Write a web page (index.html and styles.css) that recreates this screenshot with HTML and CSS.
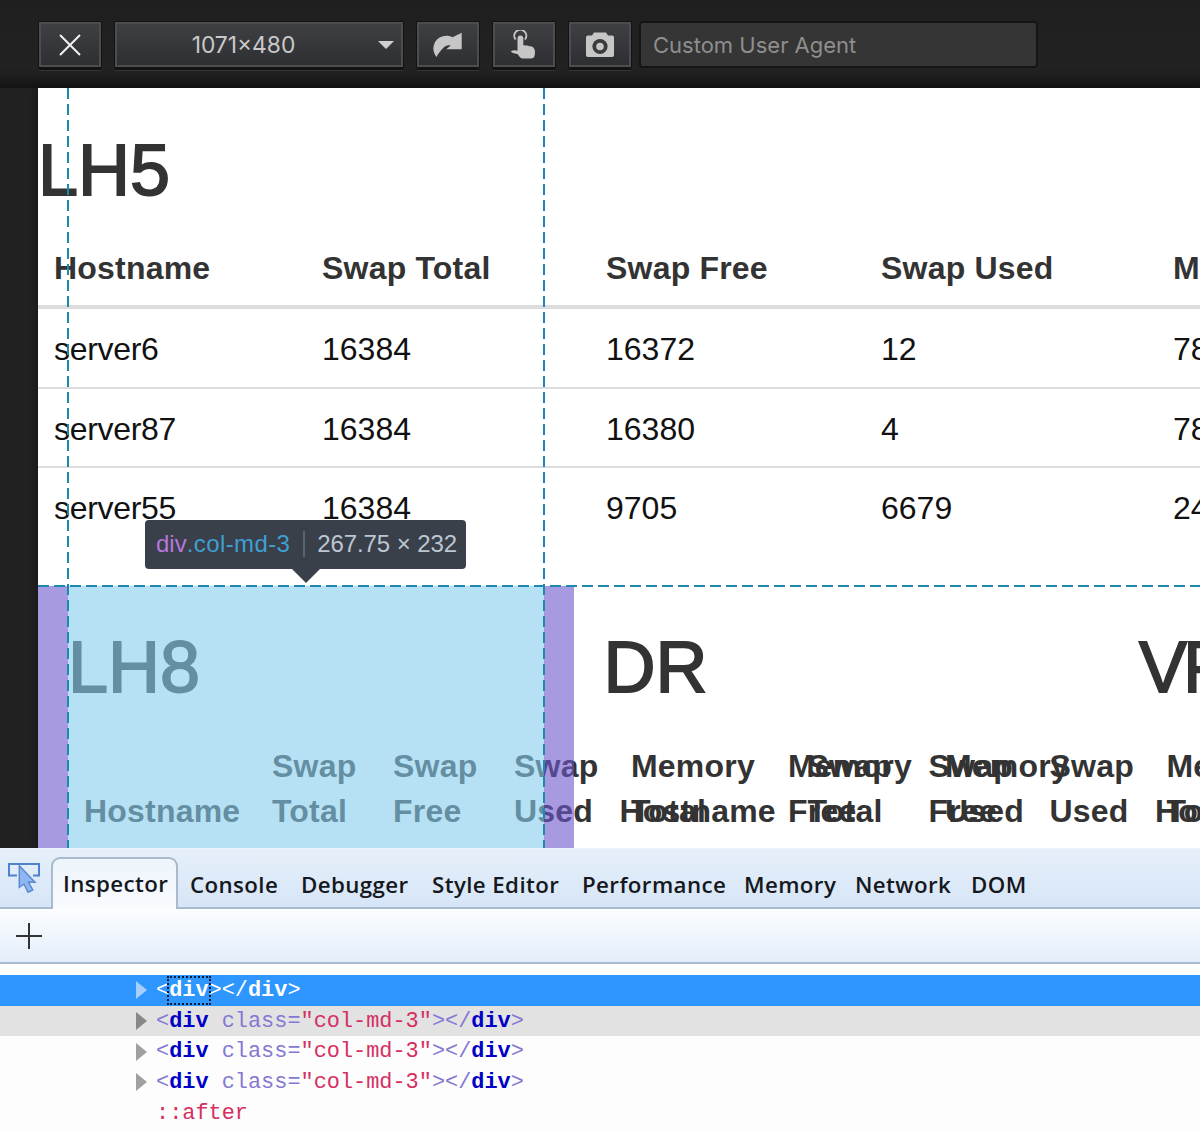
FILE: index.html
```html
<!DOCTYPE html>
<html lang="en">
<head>
<meta charset="utf-8">
<title>Responsive Design Mode</title>
<link rel="stylesheet" href="styles.css">
</head>
<body>
<header class="rdm-bar">
  <button class="rdm-btn"><svg width="24" height="24" viewBox="0 0 24 24"><path d="M2 2 22 22M22 2 2 22" class="x-stroke"/></svg></button>
  <div class="rdm-btn rdm-select"><span>1071×480</span><i class="caret"></i></div>
  <button class="rdm-btn"><svg width="32" height="28" viewBox="0 0 32 28"><path class="ico" d="M4.5 26C.8 21 .4 15.5 3.4 10.5 7 5 14 3 20.5 6.2L29.7 1.8V18.3H14.2L18.7 14.6C15.8 13.6 13 15 11.2 17 8.8 19.6 6 22.8 4.5 26Z"/></svg></button>
  <button class="rdm-btn"><svg width="28" height="30" viewBox="0 0 28 30"><path class="ico-line" d="M5.6 9.5A6 6 0 1 1 15 9.5"/><path class="ico" d="M7.5 8.5a2.9 2.9 0 0 1 5.8 0V15.5c1-.5 2.5-.3 3 .3 1-.5 2.5-.2 3 .6 1.2-.4 3.5.2 4.5 1.6 1.5 2 1.5 6 .5 8.5-.5 1.2-1.5 2-3 2H12.5c-1.5 0-2.5-1-3.5-2.5L7.5 24c-2-.2-5.5-1-6.8-2.8 2-1.2 5-1.2 6.8-.4Z"/></svg></button>
  <button class="rdm-btn"><svg width="28" height="25" viewBox="0 0 28 25"><path class="ico" d="M2 3.5H6L8 .5H20L22 3.5H26A2 2 0 0 1 28 5.5V23A2 2 0 0 1 26 25H2A2 2 0 0 1 0 23V5.5A2 2 0 0 1 2 3.5Z"/><circle class="lens-out" cx="14" cy="14.5" r="7.6"/><circle class="ico" cx="14" cy="14.5" r="3.8"/></svg></button>
  <div class="ua-input">Custom User Agent</div>
</header>

<main class="viewport">
  <h1 class="title">LH5</h1>
  <table class="tbl tbl-wide">
    <colgroup><col class="w268"><col class="w284"><col class="w275"><col class="w292"><col class="w200"></colgroup>
    <thead><tr><th>Hostname</th><th>Swap Total</th><th>Swap Free</th><th>Swap Used</th><th>Memory</th></tr></thead>
    <tbody>
      <tr><td>server6</td><td>16384</td><td>16372</td><td>12</td><td>78</td></tr>
      <tr><td>server87</td><td>16384</td><td>16380</td><td>4</td><td>78</td></tr>
      <tr><td>server55</td><td>16384</td><td>9705</td><td>6679</td><td>24</td></tr>
    </tbody>
  </table>

  <div class="cols">
    <section class="col">
      <h1 class="title">LH8</h1>
      <table class="tbl tbl-narrow">
        <colgroup><col class="w188"><col class="w121"><col class="w121"><col class="w117"><col class="w157"><col class="w157"><col class="w140"></colgroup>
        <thead><tr><th>Hostname</th><th>Swap Total</th><th>Swap Free</th><th>Swap Used</th><th>Memory Total</th><th>Memory Free</th><th>Memory Used</th></tr></thead>
      </table>
    </section>
    <section class="col">
      <h1 class="title">DR</h1>
      <table class="tbl tbl-narrow">
        <colgroup><col class="w188"><col class="w121"><col class="w121"><col class="w117"><col class="w157"><col class="w157"><col class="w140"></colgroup>
        <thead><tr><th>Hostname</th><th>Swap Total</th><th>Swap Free</th><th>Swap Used</th><th>Memory Total</th><th>Memory Free</th><th>Memory Used</th></tr></thead>
      </table>
    </section>
    <section class="col">
      <h1 class="title title-tight">VP</h1>
      <table class="tbl tbl-narrow">
        <colgroup><col class="w188"><col class="w121"><col class="w121"><col class="w117"><col class="w157"><col class="w157"><col class="w140"></colgroup>
        <thead><tr><th>Hostname</th><th>Swap Total</th><th>Swap Free</th><th>Swap Used</th><th>Memory Total</th><th>Memory Free</th><th>Memory Used</th></tr></thead>
      </table>
    </section>
  </div>

  <div class="hl-box"></div>
  <div class="guide guide-v guide-left"></div>
  <div class="guide guide-v guide-right"></div>
  <div class="guide guide-h"></div>
  <div class="tip"><span class="tip-tag">div</span><span class="tip-class">.col-md-3</span><i class="tip-sep"></i><span class="tip-size">267.75 × 232</span></div>
</main>

<footer class="devtools">
  <nav class="tabbar">
    <svg class="picker" width="32" height="30" viewBox="0 0 32 30"><path class="picker-box" d="M9 12.5H1V1H31V12.5H25"/><path class="picker-arrow" d="M11.3 2.7 27 19.3H20.5L24.8 27 20 29.3 16 21 11.3 24.3Z"/></svg>
    <div class="tab tab-on">Inspector</div>
    <div class="tab">Console</div>
    <div class="tab">Debugger</div>
    <div class="tab">Style Editor</div>
    <div class="tab">Performance</div>
    <div class="tab">Memory</div>
    <div class="tab">Network</div>
    <div class="tab">DOM</div>
  </nav>
  <div class="inspector-bar"><svg width="26" height="26" viewBox="0 0 26 26"><path class="plus" d="M13 0V26M0 13H26"/></svg></div>
  <div class="markup">
    <div class="node node-selected"><i class="tw"></i><span>&lt;<b class="focus">div</b>&gt;&lt;/<b>div</b>&gt;</span></div>
    <div class="node node-hover"><i class="tw"></i><span><span class="p">&lt;</span><b>div</b> <span class="p">class=</span><span class="v">"col-md-3"</span><span class="p">&gt;&lt;/</span><b>div</b><span class="p">&gt;</span></span></div>
    <div class="node"><i class="tw"></i><span><span class="p">&lt;</span><b>div</b> <span class="p">class=</span><span class="v">"col-md-3"</span><span class="p">&gt;&lt;/</span><b>div</b><span class="p">&gt;</span></span></div>
    <div class="node"><i class="tw"></i><span><span class="p">&lt;</span><b>div</b> <span class="p">class=</span><span class="v">"col-md-3"</span><span class="p">&gt;&lt;/</span><b>div</b><span class="p">&gt;</span></span></div>
    <div class="node node-pseudo"><span class="v">::after</span></div>
  </div>
</footer>
</body>
</html>
```
FILE: styles.css
```css
* { box-sizing: border-box; }
html, body { margin: 0; height: 100%; }
body {
  width: 1200px; height: 1130px; overflow: hidden;
  display: flex; flex-direction: column;
  background: #212121;
  font-family: "Liberation Sans", Arial, sans-serif;
}

/* Top bar */
.rdm-bar {
  flex: 0 0 88px;
  display: flex; align-items: flex-start; gap: 14px;
  padding: 22px 0 0 39px;
  background: linear-gradient(#1f1f1f 0, #222 78%, #151515 100%);
}
.rdm-btn {
  width: 62px; height: 45px; padding: 0;
  display: flex; align-items: center; justify-content: center;
  border: 2px solid #4c4d4f;
  background: linear-gradient(#3f4043, #2e2f32);
  box-shadow: 0 0 0 1px #141414, 0 3px 0 0 #111, 0 4px 0 0 #363636;
  font: 22.8px "Inter", sans-serif; color: #c9c9c9;
}
.rdm-select { width: 288px; position: relative; padding-right: 31px; }
.caret {
  position: absolute; right: 7px; top: 17px; width: 0; height: 0;
  border-left: 8px solid transparent; border-right: 8px solid transparent;
  border-top: 8px solid #cfcfcf;
}
.x-stroke { stroke: #f2f2f2; stroke-width: 2; fill: none; }
.ico { fill: #c6c6c6; }
.ico-line { fill: none; stroke: #c6c6c6; stroke-width: 2; }
.lens-out { fill: #3a3b3d; }
.ua-input {
  width: 399px; height: 47px; margin: -1px 0 0 -6px; padding-left: 12px;
  display: flex; align-items: center;
  background: #353535; border: 2px solid #151515; border-radius: 4px;
  font: 22px "Inter", sans-serif; color: #8e8e8e;
}

/* Emulated page */
.viewport {
  flex: 0 0 760px; margin-left: 38px; position: relative; overflow: hidden;
  background: #fff; color: #333;
  font-size: 32px; line-height: 1.42857;
  box-shadow: 0 0 8px rgba(0, 0, 0, .4);
}
.title {
  margin: 43px 0 17px; font-size: 72px; line-height: 1.1; font-weight: 400; color: #333;
  -webkit-text-stroke: 1.8px #333;
}
.col .title { margin: 44px 0 16px; }
.col .title-tight { letter-spacing: -4px; }
.tbl { border-collapse: collapse; table-layout: fixed; }
.tbl th, .tbl td { padding: 16px; text-align: left; vertical-align: bottom; }
.tbl th { font-weight: 700; border-bottom: 4px solid #ddd; letter-spacing: .2px; padding: 19px 16px 13px; }
.tbl td { border-top: 2px solid #ddd; color: #111; padding: 18px 16px 14px; }
.tbl td:first-child { letter-spacing: -.3px; }
.tbl thead + tbody tr:first-child td { border-top: 0; }
.tbl-wide { width: 1319px; margin-bottom: 38px; }
.tbl-narrow { width: 1001px; }
.tbl-narrow th { line-height: 45px; padding: 21px 16px 16px; }
.w268 { width: 268px; } .w284 { width: 284px; } .w275 { width: 275px; }
.w292 { width: 292px; } .w200 { width: 200px; } .w188 { width: 188px; }
.w121 { width: 121px; } .w117 { width: 117px; } .w157 { width: 157px; }
.w140 { width: 140px; }
.cols { display: flex; }
.col { flex: 0 0 535.5px; padding: 0 30px; min-width: 0; }

/* Highlighter overlay */
.hl-box {
  position: absolute; left: 0; top: 498px; bottom: 0; width: 536px;
  border-left: 30px solid rgba(110, 87, 203, .6);
  border-right: 30px solid rgba(110, 87, 203, .6);
  background: rgba(133, 203, 235, .6);
  background-clip: padding-box;
}
.guide { position: absolute; }
.guide-v {
  top: 0; bottom: 0; width: 2px;
  background: repeating-linear-gradient(to bottom, #1d88b0 0 11px, transparent 11px 16px);
}
.guide-left { left: 29px; }
.guide-right { left: 505px; }
.guide-h {
  left: 0; right: 0; top: 497px; height: 2px;
  background: repeating-linear-gradient(to right, #1d88b0 0 11px, transparent 11px 16px);
}
.tip {
  position: absolute; left: 107px; top: 432px; width: 321px; height: 49px;
  display: flex; align-items: center; padding: 0 0 1px 11px;
  background: #39404a; border-radius: 4px;
  font-size: 24px; line-height: 1; white-space: nowrap;
}
.tip::after {
  content: ""; position: absolute; left: 147px; top: 49px; width: 0; height: 0;
  border-left: 14px solid transparent; border-right: 14px solid transparent;
  border-top: 14px solid #39404a;
}
.tip-tag { color: #b876d8; }
.tip-class { color: #3f9fd2; letter-spacing: .4px; }
.tip-sep { width: 2px; height: 26px; margin: 0 12px 0 13px; background: #596470; }
.tip-size { color: #bcc6d2; letter-spacing: -.1px; }

/* Dev tools */
.devtools { flex: 1; display: flex; flex-direction: column; background: #fdfdfd; min-height: 0; position: relative; }
.tabbar {
  flex: 0 0 61px; position: relative;
  display: grid; align-items: end; padding-left: 51px;
  grid-template-columns: 139px 111px 131px 150px 162px 111px 116px auto;
  background: linear-gradient(#e6f0fa, #d6e5f7);
  border-top: 1px solid #edf3fa;
  border-bottom: 2px solid #a9bacd;
  font: 600 22.3px "Open Sans", sans-serif; letter-spacing: .4px; color: #15181d;
}
.picker { position: absolute; left: 8px; top: 14px; }
.picker-box { fill: none; stroke: #4f82cc; stroke-width: 2; }
.picker-arrow { fill: #8eb6f0; stroke: #5c8ad0; stroke-width: 1.5; }
.tab { height: 36px; line-height: 32px; margin-bottom: 2px; white-space: nowrap; }
.tab-on {
  width: 127px; height: 52px; margin-bottom: -2px; padding: 9px 0 0 10px;
  border: 2px solid #a9bacd; border-bottom: 0; border-radius: 9px 9px 0 0;
  background: linear-gradient(#edf4fb, #f9fbfe);
}
.inspector-bar {
  flex: 0 0 55px; display: flex; align-items: center; padding-left: 16px;
  background: linear-gradient(#fbfdff, #e3eefa);
  border-bottom: 2px solid #a9bacd;
}
.plus { stroke: #333; stroke-width: 2; fill: none; }
.markup {
  flex: 1; padding-top: 11px;
  font: 21.9px/30.7px "Liberation Mono", "Courier New", monospace;
}
.node { height: 30.7px; display: flex; align-items: center; padding-left: 136px; white-space: pre; }
.node > span { padding-top: 2px; }
.tw {
  width: 0; height: 0; margin-right: 9px;
  border-top: 9px solid transparent; border-bottom: 9px solid transparent;
  border-left: 11px solid #a0a0a0;
}
.node b { font-weight: 700; color: #0000c8; }
.p { color: #8378d2; }
.v { color: #d52f62; }
.node-selected { background: #2e96ff; color: #fff; }
.node-selected b { color: #fff; }
.node-selected .tw { border-left-color: #a8cffb; }
.focus { outline: 2px dotted #0a1a33; outline-offset: 0; }
.node-hover { background: #e2e2e2; }
.node-hover .tw { border-left-color: #888; }
.node-pseudo { padding-left: 156px; }
```
